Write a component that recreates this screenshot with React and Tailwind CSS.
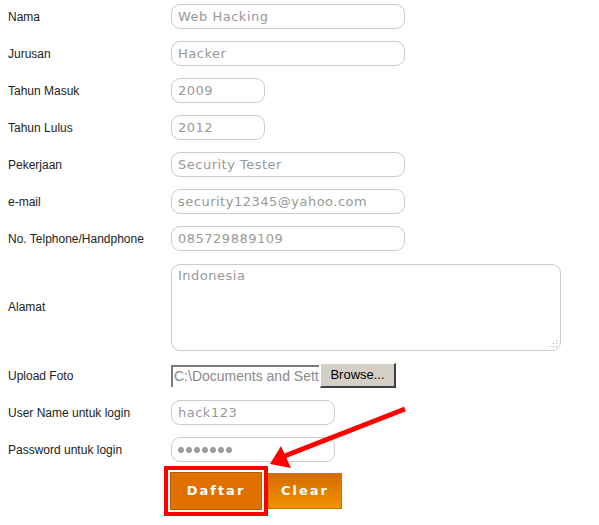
import React from 'react';

const fields = [
  { label: 'Nama', value: 'Web Hacking', width: 'w-[234px]' },
  { label: 'Jurusan', value: 'Hacker', width: 'w-[234px]' },
  { label: 'Tahun Masuk', value: '2009', width: 'w-[94px]' },
  { label: 'Tahun Lulus', value: '2012', width: 'w-[94px]' },
  { label: 'Pekerjaan', value: 'Security Tester', width: 'w-[234px]' },
  { label: 'e-mail', value: 'security12345@yahoo.com', width: 'w-[234px]' },
  { label: 'No. Telphone/Handphone', value: '085729889109', width: 'w-[234px]' },
];

const Label = ({ children }) => (
  <div className="w-[171px] shrink-0 pl-2 text-[12px] text-[#222] font-['Liberation_Sans',sans-serif]">
    {children}
  </div>
);

const TextBox = ({ value, width }) => (
  <div
    className={`${width} h-[25px] flex items-center rounded-[9px] border border-[#cccccc] bg-white px-[6px] text-[13px] tracking-[0.5px] text-[#999] font-['DejaVu_Sans',sans-serif] whitespace-nowrap overflow-hidden`}
  >
    {value}
  </div>
);

const App = () => {
  return (
    <div className="relative w-[599px] h-[525px] bg-white overflow-hidden">
      {/* Form rows */}
      <div className="flex flex-col gap-3 pt-1">
        {fields.map((f) => (
          <div key={f.label} className="flex items-center">
            <Label>{f.label}</Label>
            <TextBox value={f.value} width={f.width} />
          </div>
        ))}

        <div className="flex items-center">
          <Label>Alamat</Label>
          <div className="relative mt-[1px] w-[390px] h-[87px] rounded-[9px] border border-[#cccccc] bg-white px-[6px] pt-[1px] text-[13px] tracking-[0.5px] text-[#999] font-['DejaVu_Sans',sans-serif]">
            Indonesia
            <svg className="absolute right-[2px] bottom-[2px]" width="9" height="9" viewBox="0 0 9 9">
              <rect x="7" y="1" width="1" height="1" fill="#aaa" />
              <rect x="4" y="4" width="1" height="1" fill="#aaa" />
              <rect x="7" y="4" width="1" height="1" fill="#aaa" />
              <rect x="1" y="7" width="1" height="1" fill="#aaa" />
              <rect x="4" y="7" width="1" height="1" fill="#aaa" />
              <rect x="7" y="7" width="1" height="1" fill="#aaa" />
            </svg>
          </div>
        </div>

        <div className="flex items-center">
          <Label>Upload Foto</Label>
          <div className="flex items-center h-[25px]">
            <div className="w-[148px] h-[22px] flex items-center border-t-2 border-l-2 border-[#7a7a7a] bg-white pl-[1px] text-[14px] text-[#8a8a8a] font-['Liberation_Sans',sans-serif] whitespace-nowrap overflow-hidden">
              C:\Documents and Sett
            </div>
            <div className="ml-[1px] w-[76px] h-[25px] flex items-center justify-center bg-[#d4d0c8] border-t border-l border-white border-r-2 border-b-2 border-r-[#404040] border-b-[#404040] text-[13px] text-black font-['Liberation_Sans',sans-serif]">
              Browse...
            </div>
          </div>
        </div>

        <div className="flex items-center">
          <Label>User Name untuk login</Label>
          <TextBox value="hack123" width="w-[164px]" />
        </div>

        <div className="flex items-center">
          <Label>Password untuk login</Label>
          <div className="w-[164px] h-[25px] flex items-center gap-[2px] rounded-[9px] border border-[#cccccc] bg-white px-[6px]">
            {[0, 1, 2, 3, 4, 5, 6].map((i) => (
              <span key={i} className="w-[6px] h-[6px] rounded-full bg-[#9a9a9a]" />
            ))}
          </div>
        </div>
      </div>

      {/* Buttons */}
      <div className="flex items-center mt-[4px] ml-[164px]">
        <div className="w-[104px] h-[50px] border-4 border-[#ff0000] bg-white p-[2px]">
          <div className="w-full h-full flex items-center justify-center bg-[#e07000] border border-[#b85c00] text-white text-[13px] font-bold tracking-[2px] font-['DejaVu_Sans',sans-serif]">
            Daftar
          </div>
        </div>
        <div className="w-[74px] h-[36px] flex items-center justify-center bg-gradient-to-b from-[#d46a00] to-[#f29300] border border-[#d07000] text-white text-[13px] font-bold tracking-[2px] font-['DejaVu_Sans',sans-serif]">
          Clear
        </div>
      </div>

      {/* Red arrow annotation */}
      <svg className="absolute inset-0 pointer-events-none" width="599" height="525" viewBox="0 0 599 525">
        <line x1="405" y1="409" x2="282" y2="457" stroke="#ff0000" strokeWidth="5" />
        <polygon points="270,464 281,446 291,468" fill="#ff0000" />
      </svg>
    </div>
  );
};

export default App;
